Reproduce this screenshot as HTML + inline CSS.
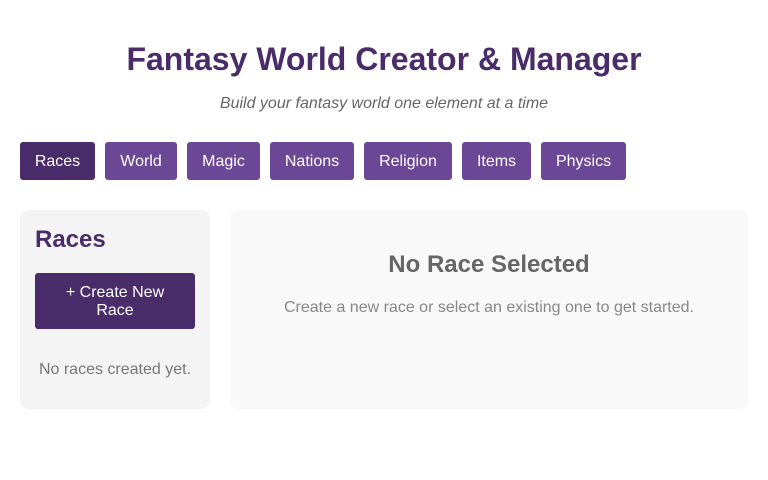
<!DOCTYPE html>
<html><head><style>
body{margin:0;width:768px;height:480px;background:#fff;font-family:"Liberation Sans",sans-serif;position:relative}
h1{position:absolute;top:40px;left:0;width:768px;margin:0;text-align:center;font-size:32px;font-weight:bold;color:#4a2c6a;line-height:38px}
.sub{position:absolute;top:94px;left:0;width:768px;text-align:center;font-style:italic;font-size:16px;color:#666;line-height:20px}
.tab{position:absolute;top:142px;height:38px;line-height:40px;border-radius:3px;background:#6b4795;color:#fff;font-size:16px;text-align:center}
.left{position:absolute;left:20px;top:210px;width:190px;height:199px;background:#f4f4f4;border-radius:8px}
.right{position:absolute;left:230px;top:210px;width:518px;height:199px;background:#f9f9f9;border-radius:8px}
</style></head><body>
<h1>Fantasy World Creator &amp; Manager</h1>
<div class="sub">Build your fantasy world one element at a time</div>
<div class="tab" style="left:20px;width:75px;background:#4a2c6a">Races</div>
<div class="tab" style="left:105px;width:72px">World</div>
<div class="tab" style="left:187px;width:73px">Magic</div>
<div class="tab" style="left:270px;width:84px">Nations</div>
<div class="tab" style="left:364px;width:88px">Religion</div>
<div class="tab" style="left:462px;width:69px">Items</div>
<div class="tab" style="left:541px;width:85px">Physics</div>
<div class="left">
<div style="position:absolute;left:15px;top:16px;font-size:24px;font-weight:bold;color:#4a2c6a">Races</div>
<div style="position:absolute;left:15px;top:63px;width:160px;height:56px;background:#4a2c6a;border-radius:3px;color:#fff;font-size:16px;text-align:center;line-height:18px;padding-top:11px;box-sizing:border-box">+ Create New<br>Race</div>
<div style="position:absolute;left:0;top:151px;width:190px;text-align:center;color:#777;font-size:16px">No races created yet.</div>
</div>
<div class="right">
<div style="position:absolute;top:41px;width:518px;text-align:center;font-size:24px;font-weight:bold;color:#666">No Race Selected</div>
<div style="position:absolute;top:89px;width:518px;text-align:center;font-size:16px;color:#888">Create a new race or select an existing one to get started.</div>
</div>
</body></html>
